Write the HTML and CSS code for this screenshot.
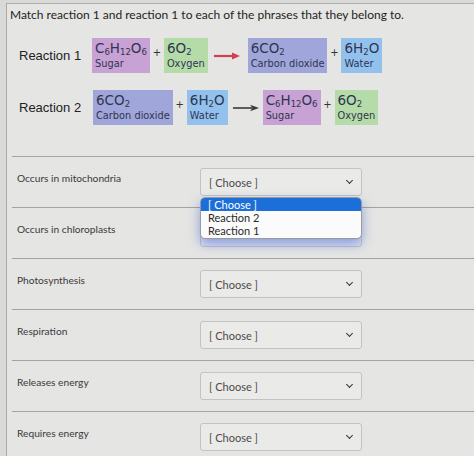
FILE: index.html
```html
<!DOCTYPE html>
<html>
<head>
<meta charset="utf-8">
<link rel="stylesheet" href="styles.css">
</head>
<body>
<div class="page">
  <p class="question">Match reaction 1 and reaction 1 to each of the phrases that they belong to.</p>

  <div class="rxn rxn1">
    <span class="rxn-label">Reaction 1</span>
    <div class="box sugar"><span class="f">C<sub>6</sub>H<sub>12</sub>O<sub>6</sub></span><span class="n">Sugar</span></div>
    <span class="plus">+</span>
    <div class="box oxygen"><span class="f">6O<sub>2</sub></span><span class="n">Oxygen</span></div>
    <svg class="arrow" width="26" height="8" viewBox="0 0 26 8"><path d="M0 4 H19" stroke="#d2404e" stroke-width="2.2"/><path d="M18 0.5 L26 4 L18 7.5 Z" fill="#d2404e"/></svg>
    <div class="box co2"><span class="f">6CO<sub>2</sub></span><span class="n">Carbon dioxide</span></div>
    <span class="plus">+</span>
    <div class="box water"><span class="f">6H<sub>2</sub>O</span><span class="n">Water</span></div>
  </div>

  <div class="rxn rxn2">
    <span class="rxn-label">Reaction 2</span>
    <div class="box co2"><span class="f">6CO<sub>2</sub></span><span class="n">Carbon dioxide</span></div>
    <span class="plus">+</span>
    <div class="box water"><span class="f">6H<sub>2</sub>O</span><span class="n">Water</span></div>
    <svg class="arrow a2" width="26" height="8" viewBox="0 0 26 8"><path d="M0 4 H19" stroke="#3a3a3a" stroke-width="1.6"/><path d="M17 0.8 L26 4 L17 7.2 L19.5 4 Z" fill="#3a3a3a"/></svg>
    <div class="box sugar"><span class="f">C<sub>6</sub>H<sub>12</sub>O<sub>6</sub></span><span class="n">Sugar</span></div>
    <span class="plus">+</span>
    <div class="box oxygen"><span class="f">6O<sub>2</sub></span><span class="n">Oxygen</span></div>
  </div>

  <div class="rows">
    <div class="row">
      <span class="label">Occurs in mitochondria</span>
      <div class="select open">
        <span>[ Choose ]</span><span class="chev"></span>
        <ul class="menu">
          <li class="hl">[ Choose ]</li>
          <li>Reaction 2</li>
          <li>Reaction 1</li>
        </ul>
      </div>
    </div>
    <div class="row">
      <span class="label">Occurs in chloroplasts</span>
      <div class="select covered"><span class="val">[ Choose ]</span><span class="chev"></span></div>
    </div>
    <div class="row">
      <span class="label">Photosynthesis</span>
      <div class="select"><span>[ Choose ]</span><span class="chev"></span></div>
    </div>
    <div class="row">
      <span class="label">Respiration</span>
      <div class="select"><span>[ Choose ]</span><span class="chev"></span></div>
    </div>
    <div class="row">
      <span class="label">Releases energy</span>
      <div class="select"><span>[ Choose ]</span><span class="chev"></span></div>
    </div>
    <div class="row">
      <span class="label">Requires energy</span>
      <div class="select"><span>[ Choose ]</span><span class="chev"></span></div>
    </div>
  </div>
</div>
</body>
</html>
```

FILE: styles.css
```css
html, body {
  margin: 0;
  padding: 0;
  background: #d9d9d7;
  overflow: hidden;
}
.page {
  margin: 3px 0 0 6px;
  border-top: 1px solid #b0b0ae;
  border-left: 1px solid #a9a9a7;
  height: 460px;
  background: #e5e5e3;
  font-family: Lato, "Liberation Sans", sans-serif;
  color: #222;
}
.question {
  margin: 0;
  padding: 3px 0 0 3px;
  font-size: 12px;
  line-height: 16px;
  color: #1e1e1e;
}
.rxn {
  display: flex;
  align-items: center;
  padding-left: 12px;
}
.rxn1 { margin-top: 15px; }
.rxn2 { margin-top: 17px; }
.rxn-label {
  width: 73px;
  flex: none;
  font-family: "Liberation Sans", Arial, sans-serif;
  font-size: 13px;
  color: #222;
}
.rxn2 .rxn-label { width: 74px; }
.box {
  display: flex;
  flex-direction: column;
  padding: 2px 3px 3px 3px;
  font-family: "DejaVu Sans", Verdana, sans-serif;
  color: #2f3550;
}
.box .f {
  font-size: 13.5px;
  line-height: 17px;
  white-space: nowrap;
}
.box .f sub {
  font-size: 8.5px;
  vertical-align: -2px;
  line-height: 0;
}
.box .n {
  font-size: 9.8px;
  line-height: 13px;
  white-space: nowrap;
}
.sugar { background: #c8a1d5; }
.oxygen { background: #b4dba8; }
.co2 { background: #a0a6d9; }
.water { background: #93c1ee; }
.plus {
  font-family: "DejaVu Sans", sans-serif;
  font-size: 10px;
  color: #333;
  width: 14px;
  text-align: center;
  margin-top: -6px;
}
.arrow {
  margin: 0 8px 0 6px;
  flex: none;
}
.a2 { margin: 0 4px 0 5px; }
.rows {
  margin: 31px 0 0 5px;
}
.row {
  display: grid;
  grid-template-columns: 183px 162px;
  border-top: 1px solid #a3a3a1;
  height: 51px;
  box-sizing: border-box;
  padding: 11px 0 0 5px;
}
.label {
  font-size: 10.2px;
  color: #3a3a3a;
  padding-top: 4px;
}
.select {
  position: relative;
  height: 28px;
  box-sizing: border-box;
  border: 1px solid #c3c3c1;
  border-radius: 3px;
  background: #eaeae8;
  display: flex;
  align-items: center;
  justify-content: space-between;
  padding: 0 9px 0 8px;
  font-size: 11px;
  color: #4a4a4a;
}
.covered {
  background: #dfe2ee;
}
.covered .val {
  visibility: hidden;
}
.chev {
  width: 4px;
  height: 4px;
  border-right: 1.6px solid #333;
  border-bottom: 1.6px solid #333;
  transform: rotate(45deg);
  margin-top: -3px;
}
.menu {
  position: absolute;
  left: -1px;
  top: 28px;
  width: 162px;
  box-sizing: border-box;
  margin: 0;
  padding: 0 0 1px 0;
  list-style: none;
  background: #fbfbfb;
  border: 1px solid #9a9a9a;
  border-radius: 5px;
  box-shadow: 0 5px 12px rgba(70, 100, 210, 0.55);
  font-size: 11px;
  color: #2a2a2a;
  overflow: hidden;
  z-index: 2;
}
.menu li {
  height: 13px;
  line-height: 13px;
  padding-left: 7px;
}
.menu li.hl {
  background: #1c6fd9;
  color: #fff;
}
```
